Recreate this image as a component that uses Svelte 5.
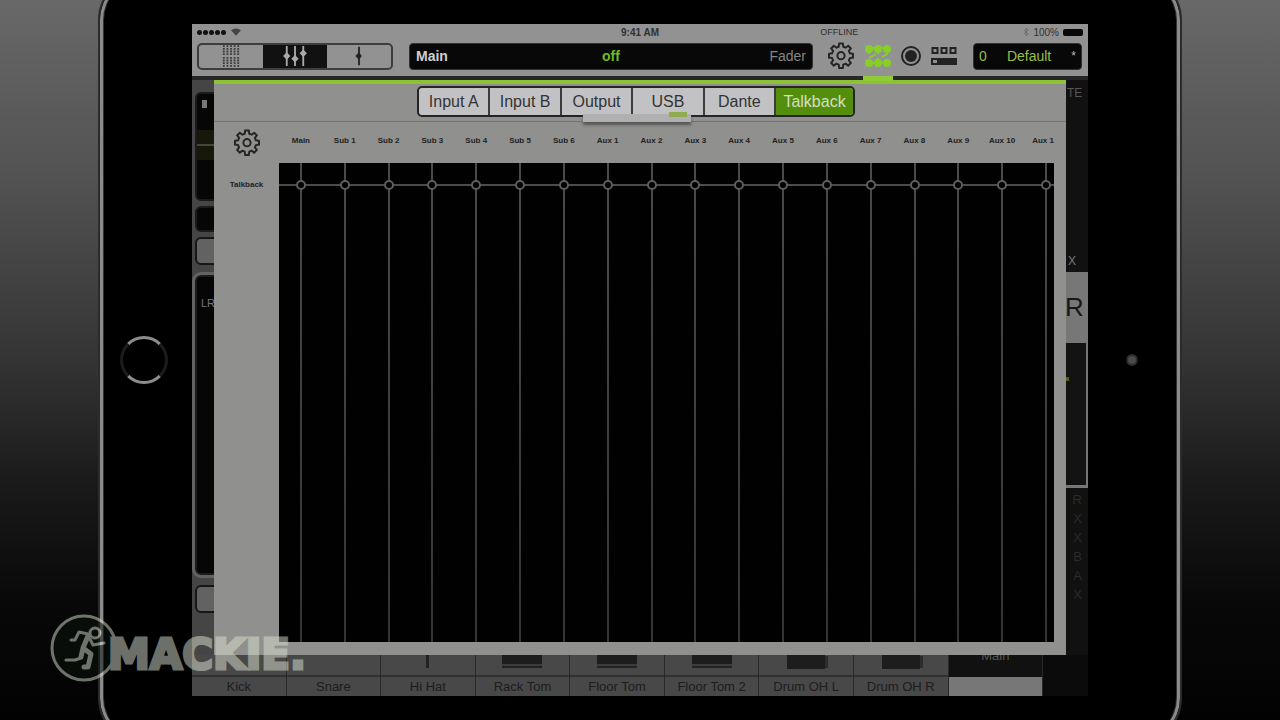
<script lang="ts">
  const outputs = [
    'Main',
    'Sub 1',
    'Sub 2',
    'Sub 3',
    'Sub 4',
    'Sub 5',
    'Sub 6',
    'Aux 1',
    'Aux 2',
    'Aux 3',
    'Aux 4',
    'Aux 5',
    'Aux 6',
    'Aux 7',
    'Aux 8',
    'Aux 9',
    'Aux 10',
    'Aux 1',
  ];

  const tabs = ['Input A', 'Input B', 'Output', 'USB', 'Dante', 'Talkback'];

  const channels = [
    { name: 'Kick', art: 'none' },
    { name: 'Snare', art: 'none' },
    { name: 'Hi Hat', art: 'stand' },
    { name: 'Rack Tom', art: 'drum' },
    { name: 'Floor Tom', art: 'drum' },
    { name: 'Floor Tom 2', art: 'drum' },
    { name: 'Drum OH L', art: 'mic' },
    { name: 'Drum OH R', art: 'mic' },
  ];

  const views = ['R', 'X', 'X', 'B', 'A', 'X'];

  let activeTab = $state('Talkback');
  let activeView = $state('mixer');
</script>

{#snippet gear()}
  <svg class="gear" viewBox="0 0 28 28" aria-hidden="true">
    <path
      d="M12.2 1.5h3.6l.5 3.2 2.3 1 2.6-1.9 2.6 2.6-1.9 2.6 1 2.3 3.1.5v3.8l-3.1.5-1 2.3 1.9 2.6-2.6 2.6-2.6-1.9-2.3 1-.5 3.2h-3.6l-.5-3.2-2.3-1-2.6 1.9L4.2 21l1.9-2.6-1-2.3-3.1-.5v-3.8l3.1-.5 1-2.3-1.9-2.6 2.6-2.6 2.6 1.9 2.3-1z"
    />
    <circle cx="14" cy="13.7" r="3.6" />
  </svg>
{/snippet}

<div class="stage">
  <div class="tablet">
    <div class="bezel left">
      <button class="home" aria-label="Home"></button>
    </div>

    <main class="screen">
      <div class="status">
        <div class="signal">
          <i></i><i></i><i></i><i></i><i></i>
          <svg viewBox="0 0 12 9" aria-hidden="true">
            <path d="M0 2.5Q6-2 12 2.5L6 9z" />
          </svg>
        </div>
        <span class="time">9:41 AM</span>
        <div class="status-right">
          <span class="offline">OFFLINE</span>
          <svg class="bluetooth" viewBox="0 0 8 12" aria-hidden="true">
            <path d="M1 3l6 6-3 2V1l3 2-6 6" />
          </svg>
          <span>100%</span>
          <span class="battery"></span>
        </div>
      </div>

      <header class="toolbar">
        <div class="views">
          <button aria-label="Overview" onclick={() => (activeView = 'overview')} class:active={activeView === 'overview'}>
            <svg viewBox="0 0 20 24" aria-hidden="true">
              <path class="grid" d="M2 0v11M6 0v11M10 0v11M14 0v11M18 0v11M2 13v11M6 13v11M10 13v11M14 13v11M18 13v11" />
            </svg>
          </button>
          <button aria-label="Mixer" onclick={() => (activeView = 'mixer')} class:active={activeView === 'mixer'}>
            <svg class="faders" viewBox="0 0 26 24" aria-hidden="true">
              <path d="M4 1v22M13 1v22M22 1v22" />
              <path class="knobs" d="M0 12l4-4 4 4-4 4zM9 15l4-4 4 4-4 4zM18 9l4-4 4 4-4 4z" />
            </svg>
          </button>
          <button aria-label="Channel" onclick={() => (activeView = 'channel')} class:active={activeView === 'channel'}>
            <svg class="fader" viewBox="0 0 10 24" aria-hidden="true">
              <path d="M5 2v20" />
              <path class="knobs" d="M1 12l4-4 3 4-3 4z" />
            </svg>
          </button>
        </div>

        <div class="display">
          <span>Main</span>
          <span class="green">off</span>
          <span class="mode">Fader</span>
        </div>

        <nav class="tools">
          <button aria-label="Settings">{@render gear()}</button>
          <button class="routing" aria-label="Routing">
            <svg viewBox="0 0 26 26" aria-hidden="true">
              <path
                class="wires"
                d="M4 5h18M4 20h18M4 5v6M13 5v6M22 5v6l-5 3M4 15l7-4M4 20v-4M13 20v-5M22 20v-4"
              />
              <circle cx="4" cy="6" r="4" />
              <circle cx="13" cy="6" r="4" />
              <circle cx="22" cy="6" r="4" />
              <circle cx="4" cy="20" r="4" />
              <circle cx="13" cy="20" r="4" />
              <circle cx="22" cy="20" r="4" />
            </svg>
          </button>
          <button class="record" aria-label="Record">
            <svg viewBox="0 0 20 20" aria-hidden="true">
              <circle class="ring" cx="10" cy="10" r="9" />
              <circle cx="10" cy="10" r="6" />
            </svg>
          </button>
          <button aria-label="Groups">
            <svg viewBox="0 0 26 20" aria-hidden="true">
              <path class="ring" d="M1.5 2h5v5h-5zM10.500 2h5v5h-5zM19.500 2h5v5h-5z" />
              <path d="M0 12h26v7H0z" />
              <path class="notch" d="M2 14h4v3H2z" />
            </svg>
          </button>
        </nav>

        <button class="preset">
          <span>0</span>
          <span>Default</span>
          <span class="star">*</span>
        </button>
      </header>

      <div class="workspace">
        <div class="mixer">
          <aside class="strip">
            <div class="eq"><b></b><i></i></div>
            <div class="gate"></div>
            <div class="key"></div>
            <div class="meter">LR</div>
            <div class="key low"></div>
          </aside>
          <aside class="master">
            <div class="mute">TE</div>
            <div class="fx">X</div>
            <div class="lr">R</div>
            <div class="fader-bay"></div>
            <ul>
              {#each views as view}
                <li>{view}</li>
              {/each}
            </ul>
          </aside>
        </div>

        <footer class="channels">
          {#each channels as channel}
            <div class="channel">
              <div class="art"><span class={channel.art}></span></div>
              <div class="name">{channel.name}</div>
            </div>
          {/each}
          <div class="channel main">
            <div class="art">Main</div>
            <div class="name"></div>
          </div>
          <div class="end"></div>
        </footer>

        <section class="dialog">
          <div class="tab-bar">
            <div class="tabs">
              {#each tabs as tab}
                <button class:active={activeTab === tab} onclick={() => (activeTab = tab)}>{tab}</button>
              {/each}
              <div class="slip"><i></i></div>
            </div>
          </div>

          <div class="patch">
            <button class="setup" aria-label="Matrix settings">{@render gear()}</button>
            <div class="columns labels">
              {#each outputs as output}
                <span>{output}</span>
              {/each}
            </div>
            <div class="row-label">Talkback</div>
            <div class="columns matrix">
              {#each outputs as output}
                <div class="cell">
                  <button aria-label={`Talkback to ${output}`}></button>
                </div>
              {/each}
            </div>
          </div>
        </section>
      </div>
    </main>

    <div class="bezel">
      <span class="camera"></span>
    </div>
  </div>

  <div class="brand">
    <svg viewBox="0 0 68 68" aria-hidden="true">
      <circle cx="34" cy="34" r="32" class="disc" />
      <circle cx="45" cy="19" r="5" />
      <path d="M21 26h4l4-8 9 2M31 44l-6 2H16M40 25l3 6 11-2" />
      <path class="torso" d="M38 22l-5 12-2 9M33 34l8 6-3 13h-4" />
    </svg>
    <span>MACKIE.</span>
  </div>
</div>

<style>
  :global(body) {
    margin: 0;
    background: #050505;
  }

  .stage {
    position: relative;
    display: flex;
    min-height: 100vh;
    box-sizing: border-box;
    padding: 0 98px;
    overflow: hidden;
    background: linear-gradient(180deg, #686868 0%, #525252 25%, #343434 50%, #191919 68%, #080808 84%, #020202 100%);
    color: #171717;
    font-family: 'Liberation Sans', Arial, sans-serif;
  }

  button {
    margin: 0;
    padding: 0;
    border: 0;
    background: none;
    color: inherit;
    font: inherit;
    cursor: pointer;
  }

  svg {
    display: block;
    fill: currentColor;
  }

  .tablet {
    display: grid;
    flex: 1;
    grid-template-columns: 88px minmax(0, 1fr) 88px;
    box-sizing: border-box;
    margin: -26px 0 -24px;
    padding: 48px 4px 46px;
    border: 2px solid #2b2b2b;
    border-radius: 46px;
    background: #000;
    box-shadow:
      inset 0 0 0 3px #8a8a8a,
      inset 0 0 0 4px #333;
  }

  .bezel {
    display: flex;
    align-items: center;
    justify-content: center;
  }

  .bezel.left {
    padding-right: 8px;
  }

  .home {
    width: 48px;
    height: 48px;
    border: 3px solid #1c1c1c;
    border-top-color: #8c8c8c;
    border-bottom-color: #8c8c8c;
    border-radius: 50%;
  }

  .camera {
    width: 8px;
    height: 8px;
    border: 2px solid #2c2c2c;
    border-radius: 50%;
    background: #4a4a4a;
  }

  .screen {
    display: flex;
    flex-direction: column;
    min-width: 0;
    background: #929292;
  }

  .status {
    display: grid;
    grid-template-columns: 1fr auto 1fr;
    align-items: center;
    height: 16px;
    padding: 0 5px;
    font-size: 10px;
    font-weight: 700;
    color: #303030;
  }

  .signal {
    display: flex;
    align-items: center;
    gap: 1px;
  }

  .signal i {
    width: 5px;
    height: 5px;
    border-radius: 50%;
    background: #111;
  }

  .signal svg {
    width: 10px;
    height: 8px;
    margin-left: 4px;
    color: #444;
  }

  .status-right {
    display: flex;
    align-items: center;
    gap: 4px;
    font-weight: 400;
  }

  .offline {
    margin: 0 auto;
    font-size: 9px;
  }

  .bluetooth {
    width: 6px;
    height: 10px;
    fill: none;
    stroke: #666;
  }

  .battery {
    width: 20px;
    height: 7px;
    border-radius: 2px;
    background: #080808;
  }

  .toolbar {
    display: flex;
    align-items: center;
    gap: 16px;
    height: 36px;
    box-sizing: border-box;
    padding: 0 6px 4px 5px;
  }

  .views {
    display: flex;
    width: 196px;
    height: 27px;
    box-sizing: border-box;
    border: 2px solid #3d3d3d;
    border-radius: 5px;
    overflow: hidden;
  }

  .views button {
    display: flex;
    flex: 1;
    align-items: center;
    justify-content: center;
    color: #222;
  }

  .views button.active {
    background: #111;
    color: #aaa;
  }

  .views svg {
    width: 18px;
    height: 22px;
    stroke: currentColor;
    stroke-width: 2;
  }

  .views .faders {
    width: 26px;
  }

  .views .fader {
    width: 10px;
  }

  .views .grid {
    stroke: #3c3c3c;
    stroke-dasharray: 2 1;
  }

  .views .knobs {
    stroke: none;
  }

  .display,
  .preset {
    display: flex;
    align-items: center;
    justify-content: space-between;
    height: 27px;
    box-sizing: border-box;
    border: 1px solid #333;
    border-radius: 4px;
    background: #080808;
  }

  .display {
    display: grid;
    flex: 1;
    grid-template-columns: 1fr auto 1fr;
    padding: 0 6px;
    color: #d0d0d0;
    font-size: 14px;
    font-weight: 700;
  }

  .display .green {
    color: #6dbd20;
  }

  .display .mode {
    color: #858585;
    font-weight: 400;
    text-align: right;
  }

  .tools {
    display: flex;
    align-items: center;
    gap: 10px;
    margin-left: -2px;
    color: #222;
  }

  .tools svg {
    width: 26px;
    height: 26px;
  }

  .tools .record svg {
    width: 20px;
    height: 20px;
  }

  .gear,
  .tools .gear {
    width: 28px;
    height: 28px;
    fill: none;
    stroke: #252525;
    stroke-width: 2;
  }

  .ring,
  .wires {
    fill: none;
    stroke: currentColor;
    stroke-width: 2;
  }

  .notch {
    fill: #8f8f8f;
  }

  .routing {
    position: relative;
    color: #86cf26;
  }

  .routing::after {
    position: absolute;
    bottom: -12px;
    left: 50%;
    z-index: 1;
    width: 30px;
    height: 5px;
    margin-left: -15px;
    background: #8ecb36;
    content: '';
  }

  .preset {
    width: 109px;
    padding: 0 5px;
    color: #99bd45;
    font-size: 14px;
  }

  .preset .star {
    color: #bbb;
    font-size: 12px;
  }

  .workspace {
    position: relative;
    display: flex;
    flex: 1;
    flex-direction: column;
    border-top: 4px solid #272727;
    background: #0b0b0b;
  }

  .mixer {
    display: flex;
    flex: 1;
    justify-content: space-between;
  }

  .strip {
    display: flex;
    flex-direction: column;
    width: 60px;
    box-sizing: border-box;
    padding: 12px 0 0 3px;
    background: #454545;
  }

  .eq,
  .gate,
  .meter {
    border: 2px solid #1b1b1b;
    border-radius: 6px;
    background: #060606;
  }

  .eq {
    height: 105px;
  }

  .eq b {
    display: block;
    width: 5px;
    height: 8px;
    margin: 6px 0 0 5px;
    background: #777;
  }

  .eq i {
    display: block;
    height: 2px;
    margin-top: 22px;
    border: solid #17180a;
    border-width: 14px 0;
    background: #474834;
    background-clip: content-box;
  }

  .gate {
    height: 22px;
    margin-top: 5px;
  }

  .key {
    height: 24px;
    margin-top: 5px;
    border: 2px solid #161616;
    border-radius: 6px;
    background: #626262;
  }

  .meter {
    height: 300px;
    box-sizing: border-box;
    margin-top: 10px;
    padding: 20px 0 0 4px;
    outline: 3px solid #626262;
    color: #777;
    font-size: 11px;
  }

  .key.low {
    margin-top: 10px;
  }

  .master {
    display: flex;
    flex-direction: column;
    width: 24px;
    box-sizing: border-box;
    padding-top: 6px;
    background: #111;
    color: #555;
    font-size: 12px;
  }

  .mute {
    height: 168px;
    padding-left: 3px;
  }

  .fx {
    height: 18px;
    padding-left: 4px;
    color: #777;
  }

  .lr {
    height: 71px;
    padding-left: 1px;
    background: #777;
    color: #171717;
    font-size: 26px;
    line-height: 71px;
  }

  .fader-bay {
    height: 142px;
    border: solid #777;
    border-width: 0 2px 3px 0;
    background: linear-gradient(#5c5a1c, #5c5a1c) 2px 34px / 3px 4px no-repeat #131313;
  }

  .master ul {
    margin: 2px 0 0;
    padding: 0 6px 0 0;
    color: #2b2b2b;
    font-size: 13px;
    line-height: 19px;
    list-style: none;
    text-align: right;
  }

  .channels {
    display: flex;
    height: 41px;
    background: #484848;
    color: #1c1c1c;
  }

  .channel {
    display: flex;
    flex: 1;
    flex-direction: column;
    box-sizing: border-box;
    border-right: 1px solid #292929;
  }

  .channel .art {
    display: flex;
    justify-content: center;
    height: 20px;
    border-bottom: 2px solid #303030;
  }

  .art .stand {
    width: 3px;
    height: 13px;
    background: #222;
  }

  .art .drum {
    width: 40px;
    height: 9px;
    border-bottom: 2px solid #3c3c3c;
    background: #1d1d1d;
    box-shadow: 0 2px 0 #222;
  }

  .art .mic {
    width: 38px;
    height: 14px;
    background: #1d1d1d;
    box-shadow: 4px 0 0 -1px #2d2d2d;
  }

  .name {
    font-size: 13px;
    line-height: 19px;
    text-align: center;
  }

  .main .art {
    background: #111;
    border-color: #111;
    color: #555;
    font-size: 13px;
    line-height: 1px;
  }

  .main .name {
    flex: 1;
    background: #777;
  }

  .end {
    width: 45px;
    background: #0b0b0b;
  }

  .dialog {
    position: absolute;
    inset: 0 22px 41px;
    display: flex;
    flex-direction: column;
    box-sizing: border-box;
    border-top: 4px solid #8dc235;
    background: #90908e;
  }

  .tab-bar {
    display: flex;
    justify-content: center;
    padding: 2px 8px 4px 0;
    border-bottom: 1px solid #727272;
  }

  .tabs {
    position: relative;
    display: flex;
    width: 438px;
    height: 31px;
    box-sizing: border-box;
    border: 2px solid #242424;
    border-radius: 5px;
    background: #c2c2c4;
  }

  .tabs button {
    flex: 1;
    border-right: 2px solid #3c3c3c;
    color: #333;
    font-size: 16px;
  }

  .tabs button.active {
    flex: 0 0 77px;
    border-right: 0;
    border-radius: 0 3px 3px 0;
    background: #538f0c;
    color: #d5dec5;
  }

  .slip {
    position: absolute;
    top: 26px;
    left: 164px;
    width: 108px;
    height: 8px;
    background: #b0b0b0;
    box-shadow: 0 3px 3px #555;
  }

  .slip i {
    position: absolute;
    top: -2px;
    right: 4px;
    width: 18px;
    height: 5px;
    background: #91ac50;
  }

  .patch {
    display: grid;
    flex: 1;
    grid-template-columns: 65px minmax(0, 1fr);
    grid-template-rows: 41px minmax(0, 1fr);
    padding: 0 12px 13px 0;
  }

  .setup {
    align-self: center;
    justify-self: center;
  }

  .columns {
    display: grid;
    grid-template-columns: repeat(17, minmax(0, 1fr)) 30px;
  }

  .labels {
    align-items: center;
    padding-bottom: 4px;
    color: #222;
    font-size: 8px;
    font-weight: 700;
    text-align: center;
    white-space: nowrap;
  }

  .labels span:last-child {
    text-align: right;
  }

  .row-label {
    padding-top: 17px;
    color: #222;
    font-size: 8px;
    font-weight: 700;
    text-align: center;
  }

  .matrix {
    background: #010101;
  }

  .cell {
    padding: 17px 0 0 17px;
    background:
      linear-gradient(#4c4c4c, #4c4c4c) 0 21px / 100% 2px no-repeat,
      linear-gradient(#4a4a4a, #343434) 21px 0 / 2px 100% no-repeat;
  }

  .cell button {
    display: block;
    width: 10px;
    height: 10px;
    border: 2px solid #5e5e5e;
    border-radius: 50%;
    background: #000;
  }

  .brand {
    position: absolute;
    bottom: 38px;
    left: 50px;
    display: flex;
    align-items: center;
    color: #d9e0cf;
    opacity: 0.5;
    pointer-events: none;
  }

  .brand svg {
    width: 68px;
    height: 68px;
    fill: none;
    stroke: currentColor;
    stroke-linecap: round;
    stroke-linejoin: round;
    stroke-width: 3;
  }

  .brand .disc {
    fill: #0c140c;
  }

  .brand .torso {
    stroke-width: 5;
  }

  .brand span {
    margin: 14px 0 0 -10px;
    font-family: 'DejaVu Sans', sans-serif;
    font-size: 42px;
    font-weight: 700;
    line-height: 40px;
    -webkit-text-stroke: 3px currentColor;
  }
</style>
